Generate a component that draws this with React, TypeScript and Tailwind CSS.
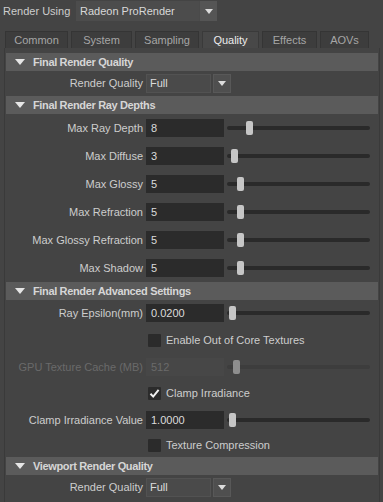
import React from 'react';

const tabs = [
  { name: 'Common', w: 'w-[63px]' },
  { name: 'System', w: 'w-[61px]' },
  { name: 'Sampling', w: 'w-[64px]' },
  { name: 'Quality', w: 'w-[57px]', active: true },
  { name: 'Effects', w: 'w-[55px]' },
  { name: 'AOVs', w: 'w-[49px]' },
];

const rayDepths = [
  { label: 'Max Ray Depth', value: '8', thumb: 19 },
  { label: 'Max Diffuse', value: '3', thumb: 4 },
  { label: 'Max Glossy', value: '5', thumb: 10 },
  { label: 'Max Refraction', value: '5', thumb: 10 },
  { label: 'Max Glossy Refraction', value: '5', thumb: 10 },
  { label: 'Max Shadow', value: '5', thumb: 10 },
];

function Triangle({ size = 'big' }: { size?: 'big' | 'small' }) {
  return size === 'big' ? (
    <span className="block w-0 h-0 border-l-[5px] border-r-[5px] border-t-[6px] border-l-transparent border-r-transparent border-t-[#e6e6e6]" />
  ) : (
    <span className="block w-0 h-0 border-l-[4px] border-r-[4px] border-t-[5px] border-l-transparent border-r-transparent border-t-[#dcdcdc]" />
  );
}

function SectionBar({ title }: { title: string }) {
  return (
    <div className="h-[18px] mx-[1px] bg-[#5b5b5b] flex items-center">
      <div className="w-[27px] flex justify-center pl-[1px]">
        <Triangle />
      </div>
      <span className="font-bold text-[#d6d6d6] tracking-[-0.35px]">{title}</span>
    </div>
  );
}

function Label({ children, disabled }: { children: React.ReactNode; disabled?: boolean }) {
  return (
    <span className={`w-[141px] shrink-0 text-right pr-[3px] whitespace-nowrap ${disabled ? 'text-[#6a6a6a]' : 'text-[#cdcdcd]'}`}>
      {children}
    </span>
  );
}

function Slider({ thumb, disabled }: { thumb: number; disabled?: boolean }) {
  return (
    <div className="relative w-[143px] h-[14px] ml-[3px] flex items-center">
      <div className={`w-full h-[4px] rounded-full ${disabled ? 'bg-[#3d3d3d]' : 'bg-[#2a2a2a]'}`} />
      <div
        className={`absolute top-0 w-[7px] h-[14px] rounded-[2px] ${disabled ? 'bg-[#8e8e8e]' : 'bg-[#c6c6c6]'}`}
        style={{ left: thumb }}
      />
    </div>
  );
}

function FieldRow({ label, value, thumb, disabled, h = 'h-[28px]' }: { label: string; value: string; thumb: number; disabled?: boolean; h?: string }) {
  return (
    <div className={`flex items-center ${h}`}>
      <Label disabled={disabled}>{label}</Label>
      <div className={`w-[78px] h-[18px] flex items-center pl-[5px] ${disabled ? 'bg-[#474747] text-[#6a6a6a]' : 'bg-[#2b2b2b] text-[#dcdcdc]'}`}>
        {value}
      </div>
      <Slider thumb={thumb} disabled={disabled} />
    </div>
  );
}

function CheckRow({ label, checked, h = 'h-[26.5px]' }: { label: string; checked?: boolean; h?: string }) {
  return (
    <div className={`flex items-center ${h}`}>
      <div className="w-[143px] shrink-0" />
      <div className="w-[13px] h-[13px] bg-[#2b2b2b] rounded-[1px] flex items-center justify-center">
        {checked && (
          <svg width="11" height="11" viewBox="0 0 11 11">
            <path d="M1.5 5.8 L4.2 8.6 L9.6 1.8" fill="none" stroke="#f0f0f0" strokeWidth="2" />
          </svg>
        )}
      </div>
      <span className="ml-[5px] text-[#cdcdcd]">{label}</span>
    </div>
  );
}

function QualityDropdown({ h = 'h-[24px]' }: { h?: string }) {
  return (
    <div className={`flex items-center ${h}`}>
      <Label>Render Quality</Label>
      <div className="w-[65px] h-[19px] bg-[#4a4a4a] border border-[#525252] flex items-center pl-[3px] text-[#dcdcdc]">Full</div>
      <div className="w-[18px] h-[19px] ml-[2px] bg-[#4f4f4f] border border-[#585858] flex items-center justify-center">
        <Triangle size="small" />
      </div>
    </div>
  );
}

export default function App() {
  return (
    <div className="w-[383px] h-[502px] overflow-hidden bg-[#444444] font-['Liberation_Sans',Arial,sans-serif] text-[11px] leading-none">
      <div className="flex items-center h-[21px] pl-[3px] pt-[1px]">
        <span className="w-[73px] text-[#cdcdcd]">Render Using</span>
        <div className="w-[123px] h-[20px] bg-[#4c4c4c] flex items-center pl-[4px] text-[#d8d8d8]">Radeon ProRender</div>
        <div className="w-[18px] h-[20px] bg-[#555555] border-l border-[#4a4a4a] flex items-center justify-center">
          <Triangle size="small" />
        </div>
      </div>

      <div className="flex gap-[3px] h-[17px] mt-[10px] pl-[5px]">
        {tabs.map((t) => (
          <div
            key={t.name}
            className={`${t.w} flex items-center justify-center border border-b-0 ${t.active ? 'bg-[#484848] border-[#3a3a3a] text-[#ececec]' : 'bg-[#3d3d3d] border-[#353535] text-[#a6a6a6]'}`}
          >
            {t.name}
          </div>
        ))}
      </div>

      <div className="ml-[4px] mr-[3px] h-[460px] border-l border-r border-[#3a3a3a] pt-[5px] bg-[#444444]">
        <SectionBar title="Final Render Quality" />
        <QualityDropdown h="h-[25px]" />
        <SectionBar title="Final Render Ray Depths" />
        {rayDepths.map((r) => (
          <FieldRow key={r.label} label={r.label} value={r.value} thumb={r.thumb} />
        ))}
        <SectionBar title="Final Render Advanced Settings" />
        <div className="mt-[-1px]">
          <FieldRow label="Ray Epsilon(mm)" value="0.0200" thumb={2} h="h-[28.5px]" />
          <CheckRow label="Enable Out of Core Textures" />
          <FieldRow label="GPU Texture Cache (MB)" value="512" thumb={6} disabled h="h-[26.5px]" />
          <CheckRow label="Clamp Irradiance" checked />
          <FieldRow label="Clamp Irradiance Value" value="1.0000" thumb={2} h="h-[26.5px]" />
          <CheckRow label="Texture Compression" h="h-[23.5px]" />
        </div>
        <SectionBar title="Viewport Render Quality" />
        <QualityDropdown />
      </div>
    </div>
  );
}
